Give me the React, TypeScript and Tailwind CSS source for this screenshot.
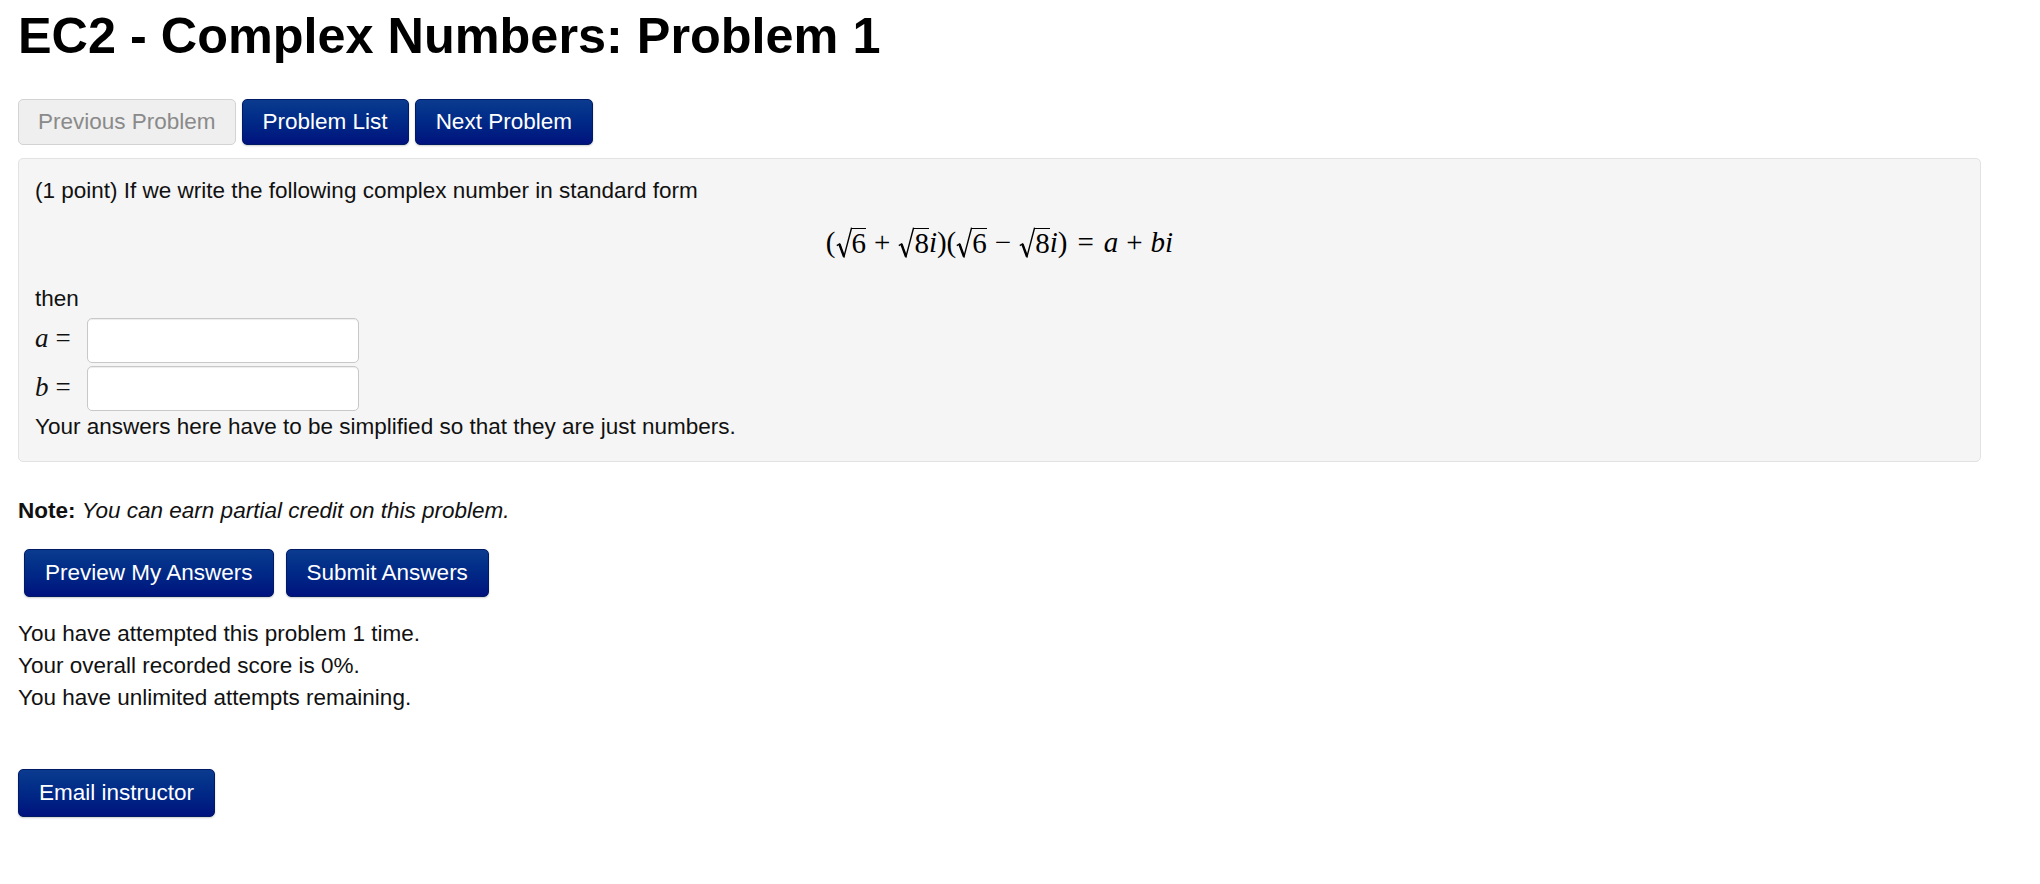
import React from 'react';

const navBlue =
  'h-[46px] px-[20px] rounded-[5px] border border-[#001a66] bg-gradient-to-b from-[#0b3b8f] to-[#00117e] text-white shadow-[0_1px_2px_rgba(0,0,0,0.2)]';
const bigBlue =
  'h-[48px] px-[20px] rounded-[5px] border border-[#001a66] bg-gradient-to-b from-[#0b3b8f] to-[#00117e] text-white shadow-[0_1px_2px_rgba(0,0,0,0.2)]';

function Sqrt({ n }: { n: string }) {
  return (
    <span className="inline-flex items-end h-[31px]">
      <svg viewBox="0 0 16 31" className="w-[16px] h-[31px]" fill="none">
        <path d="M0.8 18.6 L3.4 17 L8 29.6 L15.6 0.7" stroke="#000" strokeWidth="1.4" strokeLinejoin="miter" />
        <path d="M3.4 17 L8 29.6" stroke="#000" strokeWidth="2.4" />
      </svg>
      <span className="border-t-[1.4px] border-black leading-[29px]">{n}</span>
    </span>
  );
}

function Op({ c, rel }: { c: string; rel?: boolean }) {
  return <span className={rel ? 'mx-[10px] leading-[31px]' : 'mx-[8px] leading-[31px]'}>{c}</span>;
}

function T({ c, it }: { c: string; it?: boolean }) {
  return <span className={it ? 'italic leading-[31px]' : 'leading-[31px]'}>{c}</span>;
}

function Equation() {
  return (
    <span className="inline-flex items-end font-['Liberation_Serif',serif] text-[29px] text-black">
      <T c="(" />
      <Sqrt n="6" />
      <Op c="+" />
      <Sqrt n="8" />
      <T c="i" it />
      <T c=")" />
      <T c="(" />
      <Sqrt n="6" />
      <Op c="−" />
      <Sqrt n="8" />
      <T c="i" it />
      <T c=")" />
      <Op c="=" rel />
      <T c="a" it />
      <Op c="+" />
      <T c="b" it />
      <T c="i" it />
    </span>
  );
}

function AnswerRow({ v }: { v: string }) {
  return (
    <div className="flex items-center h-[48.5px]">
      <span className="font-['Liberation_Serif',serif] text-[27px] w-[52px]">
        <span className="italic">{v}</span>
        <span className="ml-[7px]">=</span>
      </span>
      <input
        type="text"
        className="mt-[3px] w-[272px] h-[45px] rounded-[5px] border border-[#c8c8c8] bg-white shadow-[inset_0_1px_1px_rgba(0,0,0,0.075)] outline-none px-2"
      />
    </div>
  );
}

export default function App() {
  return (
    <div className="min-h-screen bg-white font-['Liberation_Sans',Arial,sans-serif] text-[22.5px] leading-[31.2px] text-[#111] px-[18px] pt-[8px]">
      <h1 className="text-[50.4px] leading-[55px] font-bold text-black">EC2 - Complex Numbers: Problem 1</h1>

      <div className="mt-[36px] flex gap-[6px]">
        <button className="h-[46px] px-[19px] rounded-[5px] border border-[#d3d3d3] bg-[#efefef] text-[#8a8a8a]">
          Previous Problem
        </button>
        <button className={navBlue}>Problem List</button>
        <button className={navBlue}>Next Problem</button>
      </div>

      <div className="mt-[13px] w-[1963px] rounded-[5px] border border-[#e2e2e2] bg-[#f5f5f5] px-[16px] pt-[16px] pb-[18px]">
        <div>(1 point) If we write the following complex number in standard form</div>
        <div className="h-[77px] pt-[21px] text-center">
          <Equation />
        </div>
        <div>then</div>
        <AnswerRow v="a" />
        <AnswerRow v="b" />
        <div>Your answers here have to be simplified so that they are just numbers.</div>
      </div>

      <div className="mt-[33px]">
        <span className="font-bold">Note:</span> <i>You can earn partial credit on this problem.</i>
      </div>

      <div className="mt-[23px] ml-[6px] flex gap-[12px]">
        <button className={bigBlue}>Preview My Answers</button>
        <button className={bigBlue}>Submit Answers</button>
      </div>

      <div className="mt-[21px] leading-[32px]">
        <div>You have attempted this problem 1 time.</div>
        <div>Your overall recorded score is 0%.</div>
        <div>You have unlimited attempts remaining.</div>
      </div>

      <div className="mt-[55px]">
        <button className={bigBlue}>Email instructor</button>
      </div>
    </div>
  );
}
